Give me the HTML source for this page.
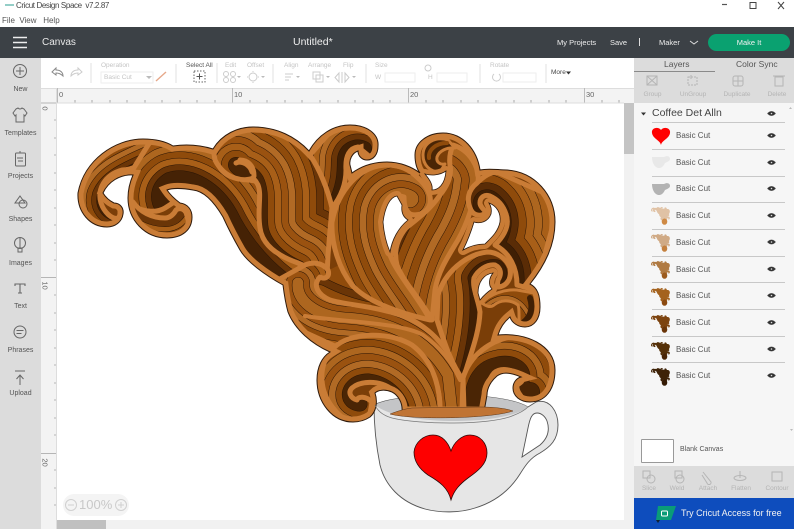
<!DOCTYPE html>
<html><head><meta charset="utf-8"><style>
html,body{margin:0;padding:0;width:794px;height:529px;overflow:hidden;background:#fff;font-family:"Liberation Sans",sans-serif}
body{filter:blur(.3px)}
.a{position:absolute;white-space:nowrap}
svg{position:absolute;left:0;top:0}
.n{font-size:7px;color:#555;width:41px;text-align:center;left:0}
.t{font-size:6.5px;color:#c4c4c4}
.p{font-size:6.5px;color:#b4b4b4;text-align:center}
.l{font-size:8px;color:#555;left:676px}
</style></head><body>
<div class="a" style="left:0;top:0;width:794px;height:27px;background:#fff"></div>
<div class="a" style="left:16px;top:1px;font-size:8px;letter-spacing:-.38px;color:#444">Cricut Design Space&nbsp; v7.2.87</div>
<div class="a" style="left:2px;top:16px;font-size:8px;color:#555">File&nbsp; View&nbsp; &nbsp;Help</div>
<div class="a" style="left:0;top:27px;width:794px;height:31px;background:#3c4146"></div>
<div class="a" style="left:42px;top:37px;font-size:10px;color:#e8e8e8">Canvas</div>
<div class="a" style="left:293px;top:36px;font-size:10.5px;color:#eee">Untitled*</div>
<div class="a" style="left:557px;top:38px;font-size:7.5px;color:#eee">My Projects</div>
<div class="a" style="left:610px;top:38px;font-size:7.5px;color:#eee">Save</div>
<div class="a" style="left:659px;top:38px;font-size:7.5px;color:#eee">Maker</div>
<div class="a" style="left:708px;top:34px;width:82px;height:17px;border-radius:9px;background:#0aa170;color:#f2f2f2;font-size:7.5px;line-height:17px;text-align:center">Make It</div>
<div class="a" style="left:0;top:58px;width:41px;height:471px;background:#dcdcdc"></div>
<div class="a" style="left:41px;top:58px;width:593px;height:30px;background:#fff"></div>
<div class="a" style="left:41px;top:88px;width:593px;height:15px;background:#f3f3f3;border-top:1px solid #ddd;box-sizing:border-box"></div>
<div class="a" style="left:41px;top:103px;width:16px;height:426px;background:#f3f3f3"></div>
<div class="a" style="left:624px;top:103px;width:10px;height:417px;background:#f1f1f1"></div>
<div class="a" style="left:624px;top:103px;width:10px;height:51px;background:#c4c4c4"></div>
<div class="a" style="left:57px;top:520px;width:577px;height:9px;background:#f1f1f1"></div>
<div class="a" style="left:57px;top:520px;width:49px;height:9px;background:#c0c0c0"></div>
<div class="a" style="left:634px;top:58px;width:160px;height:471px;background:#f6f6f6"></div>
<div class="a" style="left:634px;top:58px;width:160px;height:45px;background:#dcdcdc"></div>
<div class="a" style="left:634px;top:71px;width:81px;height:1px;background:#8a8a8a"></div>
<div class="a" style="left:664px;top:59px;font-size:8.5px;color:#555">Layers</div>
<div class="a" style="left:736px;top:59px;font-size:8.5px;color:#555">Color Sync</div>
<div class="a" style="left:634px;top:466px;width:160px;height:32px;background:#dcdcdc"></div>
<div class="a" style="left:634px;top:498px;width:160px;height:31px;background:#0e4dbd"></div>
<div class="a" style="left:681px;top:508px;font-size:9px;color:#f2f2f2">Try Cricut Access for free</div>
<div class="a" style="left:641px;top:439px;width:31px;height:22px;background:#fff;border:1px solid #999;border-radius:1px"></div>
<div class="a" style="left:680px;top:446px;font-size:7px;color:#555">Blank Canvas</div>

<div class="a n" style="top:86px">New</div>
<div class="a n" style="top:130px">Templates</div>
<div class="a n" style="top:173px">Projects</div>
<div class="a n" style="top:216px">Shapes</div>
<div class="a n" style="top:260px">Images</div>
<div class="a n" style="top:303px">Text</div>
<div class="a n" style="top:347px">Phrases</div>
<div class="a n" style="top:390px">Upload</div>

<div class="a t" style="left:101px;top:62px">Operation</div>
<div class="a t" style="left:104px;top:74px">Basic Cut</div>
<div class="a" style="left:186px;top:62px;font-size:6.5px;color:#555">Select All</div>
<div class="a t" style="left:225px;top:62px">Edit</div>
<div class="a t" style="left:247px;top:62px">Offset</div>
<div class="a t" style="left:284px;top:62px">Align</div>
<div class="a t" style="left:308px;top:62px">Arrange</div>
<div class="a t" style="left:343px;top:62px">Flip</div>
<div class="a t" style="left:375px;top:62px">Size</div>
<div class="a t" style="left:375px;top:74px">W</div>
<div class="a t" style="left:428px;top:74px">H</div>
<div class="a t" style="left:490px;top:62px">Rotate</div>
<div class="a" style="left:551px;top:69px;font-size:6.5px;color:#444">More</div>

<div class="a" style="left:59px;top:90px;font-size:7.5px;color:#666">0</div>
<div class="a" style="left:234px;top:90px;font-size:7.5px;color:#666">10</div>
<div class="a" style="left:410px;top:90px;font-size:7.5px;color:#666">20</div>
<div class="a" style="left:586px;top:90px;font-size:7.5px;color:#666">30</div>
<div class="a" style="left:43px;top:104px;font-size:7.5px;color:#666;transform:rotate(90deg)">0</div>
<div class="a" style="left:41px;top:281px;font-size:7.5px;color:#666;transform:rotate(90deg)">10</div>
<div class="a" style="left:41px;top:458px;font-size:7.5px;color:#666;transform:rotate(90deg)">20</div>

<div class="a p" style="left:634px;top:91px;width:37px">Group</div>
<div class="a p" style="left:673px;top:91px;width:40px">UnGroup</div>
<div class="a p" style="left:716px;top:91px;width:42px">Duplicate</div>
<div class="a p" style="left:758px;top:91px;width:38px">Delete</div>
<div class="a p" style="left:634px;top:485px;width:30px">Slice</div>
<div class="a p" style="left:663px;top:485px;width:28px">Weld</div>
<div class="a p" style="left:691px;top:485px;width:34px">Attach</div>
<div class="a p" style="left:724px;top:485px;width:34px">Flatten</div>
<div class="a p" style="left:760px;top:485px;width:34px">Contour</div>

<div class="a" style="left:652px;top:107px;font-size:10.5px;color:#444">Coffee Det Alln</div>
<div class="a l" style="top:131px">Basic Cut</div>
<div class="a l" style="top:158px">Basic Cut</div>
<div class="a l" style="top:184px">Basic Cut</div>
<div class="a l" style="top:211px">Basic Cut</div>
<div class="a l" style="top:238px">Basic Cut</div>
<div class="a l" style="top:265px">Basic Cut</div>
<div class="a l" style="top:291px">Basic Cut</div>
<div class="a l" style="top:318px">Basic Cut</div>
<div class="a l" style="top:345px">Basic Cut</div>
<div class="a l" style="top:371px">Basic Cut</div>
<div class="a" style="left:63px;top:494px;width:66px;height:22px;border-radius:11px;background:#f4f4f4"></div>
<div class="a" style="left:79px;top:497px;font-size:13px;color:#c8c8c8">100%</div>

<svg width="794" height="529" viewBox="0 0 794 529">
<defs>
<path id="sil" d="M78,193 C84,160 115,139 143,139 C155,139 165,141 173,146 C187,144 200,145 213,149 C222,134 238,127 253,127 C277,127 296,137 309,151 C318,135 333,125 350,125 C367,125 379,134 378,146 C378,155 373,160 367,160 C362,160 358,156 358,151 C352,153 349,160 350,165 L352,173 C363,165 375,162 387,162 C400,162 412,167 420,173 C416,168 415,162 415,155 C415,142 428,133 443,133 C463,133 477,150 480,170 C489,168 498,170 507,170 C535,172 555,195 555,222 C555,245 545,265 530,284 C538,288 540,296 540,307 C540,319 534,327 525,327 C518,327 512,323 510,317 C504,322 500,328 498,335 C525,332 555,345 555,370 C555,390 545,402 530,402 C520,402 513,396 513,388 C513,382 517,378 521,377 C510,372 502,372 497,376 C491,381 487,388 487,395 L484,412 L402,412 C403,403 398,395 392,392 C385,389 378,390 375,393 C378,402 376,412 370,417 C364,421 358,422 353,422 C332,422 317,402 317,380 C317,367 322,357 330,352 C312,344 295,330 288,312 C286,305 284,293 283,285 C265,275 247,262 240,250 C232,236 228,228 223,217 C213,200 203,191 193,190 C182,188 172,188 167,190 C171,196 176,200 180,203 C188,204 192,210 192,217 C192,230 182,238 167,238 C145,238 128,220 128,198 C128,190 130,182 133,175 C120,174 108,182 103,193 C106,198 110,201 114,203 C120,203 124,208 123,214 C122,222 115,227 107,227 C90,227 77,212 78,193 Z"/>
<clipPath id="csil"><use href="#sil"/></clipPath>

<path id="w1" d="M170,147 L130,125 L65,190 L100,238 L122,224 L118,218 C112,220 104,212 101,203 C97,190 104,175 122,170 C135,170 150,160 170,147Z"/>
<path id="s1" d="M170,150 C145,165 110,172 101,195 C98,207 106,216 116,217"/>
<path id="w2" d="M213,148 L150,142 L120,190 L135,207 C145,212 157,213 165,208 L185,195 L240,262 L300,305 L300,262 L262,235 L262,182 L235,178 C222,175 216,165 213,148Z"/>
<path id="s2" d="M287,285 C262,268 240,240 228,215 C215,192 190,175 170,182 C160,188 158,200 166,208"/>
<path id="w3b" d="M133,202 C140,212 152,218 165,218 C170,218 174,214 176,210 C180,207 186,209 187,216 L195,245 L120,245 L120,205Z"/>
<path id="s3" d="M133,202 C140,212 152,218 165,218 C172,218 176,214 178,210"/>
<path id="w4" d="M213,148 L240,115 L320,145 L332,207 L328,255 L327,275 L298,263 C275,255 262,243 260,228 C257,210 262,195 258,185 C256,181 255,180 253,178 C245,182 225,180 215,160Z"/>
<path id="s4" d="M298,268 C275,258 260,240 260,222 C259,205 262,192 256,180 C250,170 240,172 236,165"/>
<path id="w5" d="M310,155 L345,115 L390,140 L380,165 L358,147 C350,148 345,155 346,170 C346,185 340,198 332,208 C328,190 320,170 310,155Z"/>
<path id="s5" d="M333,208 C345,190 345,170 345,160 C346,150 355,145 364,149"/>
<path id="w12b" d="M325,272 L345,262 L375,310 L318,299 C312,290 318,282 325,278 Z"/>
<path id="s12b" d="M320,292 C335,300 352,306 372,310"/>
<path id="w12" d="M305,265 L278,280 L278,320 L337,347 C360,332 400,336 425,360 C440,385 440,400 440,410 L462,410 L463,380 C450,350 430,325 400,315 C370,305 345,305 330,300 C318,295 312,285 320,277 C326,280 330,276 328,270 C322,262 312,262 305,265Z"/>
<path id="s12" d="M298,283 C296,300 315,316 345,318 C385,320 425,335 448,375 L452,412"/>
<path id="w13" d="M337,345 C325,355 321,368 322,380 C323,400 338,418 355,425 L368,425 L372,402 C366,396 358,396 357,400 C350,398 348,392 352,388 C360,381 378,380 390,388 C398,394 403,400 403,410 L440,410 C440,385 432,360 412,345 C390,332 355,332 337,345Z"/>
<path id="s13" d="M403,412 C400,395 385,383 368,381 C355,381 347,390 350,398 C352,402 356,404 360,404"/>
<path id="w6" d="M388,165 C360,165 338,190 332,222 C331,245 340,270 352,285 C365,300 395,312 430,320 C420,300 402,280 393,262 C385,245 380,230 383,212 C386,200 395,194 404,197 C404,204 405,210 410,214 C418,217 428,212 430,204 C432,195 426,185 418,178 C410,170 400,165 388,165Z"/>
<path id="s6" d="M430,320 C420,300 402,280 393,262 C385,245 380,230 383,212 C386,200 398,192 410,199"/>
<path id="w7" d="M453,145 C470,150 480,168 478,182 C473,205 468,222 458,240 C447,258 438,272 435,290 L432,320 C420,298 405,285 397,265 C393,250 398,238 406,228 C416,220 430,210 440,195 C448,185 452,175 450,165 C449,158 450,152 453,145Z"/>
<path id="s7" d="M432,318 C435,285 447,258 458,240 C468,222 475,205 477,182 C478,170 470,155 455,148"/>
<path id="w8" d="M423,155 C423,143 435,136 448,140 L455,148 C447,147 439,151 437,157 C436,162 440,165 445,164 L440,172 C430,172 423,165 423,155Z"/>
<path id="w9" d="M497,172 L560,200 L535,290 L517,285 C517,268 510,253 495,245 C505,235 510,225 506,214 C503,205 497,199 490,196 C485,194 480,197 480,203 C480,206 483,209 486,212 C482,217 474,216 471,210 C466,200 468,190 477,183 C483,177 490,172 497,172Z"/>
<path id="s9" d="M517,287 C520,265 510,250 497,245 C510,225 505,208 492,198 C484,193 478,200 480,208"/>
<path id="w10" d="M487,252 C465,255 445,272 438,295 L437,320 C445,345 452,365 463,380 C470,355 479,335 480,312 C478,298 472,288 474,278 C478,270 487,264 495,265 C501,268 502,274 498,280 L497,287 C507,287 512,278 510,268 C506,258 497,252 487,252Z"/>
<path id="s10" d="M463,382 C478,335 478,298 474,278 C478,270 488,264 497,266 C502,270 502,276 498,282"/>
<path id="w11" d="M482,303 C490,294 505,289 517,290 L545,295 L535,330 L520,330 C518,317 520,310 518,305 C510,299 500,300 494,305 C490,308 486,306 482,303Z"/>
<path id="w14" d="M464,410 L463,378 C470,355 490,340 515,336 L560,345 L560,405 L530,405 C520,397 516,390 517,385 C522,382 524,380 521,376 C510,368 500,368 494,373 C488,380 485,392 485,410Z"/>
<path id="s14" d="M475,410 C472,385 482,370 497,367 C510,363 522,370 520,378 C518,386 520,392 530,392"/>
<clipPath id="c1"><use href="#w1"/></clipPath><clipPath id="c2"><use href="#w2"/></clipPath><clipPath id="c3"><use href="#w3b"/></clipPath><clipPath id="c4"><use href="#w4"/></clipPath><clipPath id="c5"><use href="#w5"/></clipPath><clipPath id="c6"><use href="#w6"/></clipPath><clipPath id="c7"><use href="#w7"/></clipPath><clipPath id="c8"><use href="#w8"/></clipPath><clipPath id="c9"><use href="#w9"/></clipPath><clipPath id="c10"><use href="#w10"/></clipPath><clipPath id="c11"><use href="#w11"/></clipPath><clipPath id="c12"><use href="#w12"/></clipPath><clipPath id="c12b"><use href="#w12b"/></clipPath><clipPath id="c13"><use href="#w13"/></clipPath><clipPath id="c14"><use href="#w14"/></clipPath>
</defs>
<!-- ruler ticks -->
<path d="M57.5,88V103M232.5,88V103M408.5,88V103M584.5,88V103" stroke="#bbb" fill="none"/>
<path d="M75,100V103M92,100V103M110,100V103M127,100V103M145,100V103M162,100V103M180,100V103M197,100V103M215,100V103M250,100V103M267,100V103M285,100V103M302,100V103M320,100V103M338,100V103M355,100V103M373,100V103M390,100V103M426,100V103M443,100V103M461,100V103M478,100V103M496,100V103M514,100V103M531,100V103M549,100V103M566,100V103M602,100V103M619,100V103" stroke="#aaa" fill="none"/>
<path d="M41,103H57M41,277.500H57M41,453.500H57M54,120H57M54,138H57M54,155H57M54,173H57M54,190H57M54,208H57M54,225H57M54,243H57M54,260H57M54,295H57M54,313H57M54,330H57M54,348H57M54,365H57M54,383H57M54,400H57M54,418H57M54,435H57M54,470H57M54,488H57M54,505H57" stroke="#b5b5b5" fill="none"/>
<path d="M56.500,88V529M57,103H624" stroke="#ddd" fill="none"/>
<!-- header icons -->
<path d="M13,37.500H27M13,42.500H27M13,47.500H27" stroke="#eee" stroke-width="1.6"/>
<path d="M690,41l4,3l4,-3" stroke="#ddd" fill="none"/>
<path d="M639.500,38V46" stroke="#ddd" stroke-width="1"/>
<path d="M722,4.500h5" stroke="#555" stroke-width="1.2"/>
<rect x="750" y="2.500" width="6" height="6" fill="none" stroke="#444"/>
<path d="M778,2l6,7M784,2l-6,7" stroke="#444"/>
<path d="M5,5h9" stroke="#2a9d8f" stroke-width="1"/>
<!-- sidebar icons -->
<g fill="none" stroke="#666" stroke-width="1">
<circle cx="20" cy="71" r="6.500"/><path d="M20,67v8M16,71h8"/>
<path d="M16,109 L18,108 Q20,110 22,108 L24,109 L27,113 L25,116 L24,115 V122 H16 V115 L15,116 L13,113Z"/>
<rect x="15.500" y="153" width="10" height="13" rx="1"/><path d="M17,158h6M18,161h5M20,151v2"/>
<path d="M20,196l5,7h-10z"/><circle cx="23" cy="204" r="4"/>
<circle cx="20" cy="243" r="5.500"/><path d="M18,248h4v4h-4zM20,238v10"/>
<path d="M15,286 V284 H25 V286 M20,284 V293 M18,293 H22" stroke-width="1.100"/>
<circle cx="20" cy="332" r="6"/><path d="M16.500,330.500h7M16.500,333.500h5"/>
<path d="M15,371h10M20,385v-10M16.500,379l3.500,-4l3.500,4"/>
</g>
<!-- toolbar icons -->
<g fill="none" stroke="#888" stroke-width="1">
<path d="M52,72l4,-4v2c5,0 7,3 7,6c-2,-2 -4,-3 -7,-3v2z"/>
<path d="M82,72l-4,-4v2c-5,0 -7,3 -7,6c2,-2 4,-3 7,-3v2z" stroke="#ccc"/>
<path d="M91,63V83M217,63V83M273,64V83M366,64V83M480,64V83M546,64V83M176,64V83" stroke="#e2e2e2"/>
<path d="M156,81l10,-9" stroke="#e6a88a" stroke-width="1.400"/>
<rect x="101" y="72" width="52" height="11" stroke="#eee"/>
<rect x="194" y="71" width="11" height="11" stroke="#666" stroke-dasharray="1.500 1.500"/><path d="M196.500,76.500h6M199.500,73.500v6" stroke="#555"/>
<g stroke="#ccc"><circle cx="226" cy="74" r="2.500"/><circle cx="233" cy="74" r="2.500"/><circle cx="226" cy="80" r="2.500"/><circle cx="233" cy="80" r="2.500"/>
<circle cx="253" cy="77" r="4"/><path d="M253,71v1M253,82v1M247,77h1M258,77h1"/>
<path d="M285,74h8M285,77h6M285,80h4"/>
<rect x="313" y="72" width="7" height="7"/><rect x="316" y="75" width="7" height="7"/>
<path d="M339,73v9l-4,-4.500zM345,73v9l4,-4.500zM342,72v11"/>
<path d="M494,74a4,4 0 1 0 5,0"/>
<rect x="385" y="73" width="30" height="9" stroke="#eee"/><rect x="437" y="73" width="30" height="9" stroke="#eee"/><rect x="503" y="73" width="33" height="9" stroke="#eee"/>
<circle cx="428" cy="68" r="3"/></g>
</g>
<path d="M146,76l3,3l3,-3zM237,76l2,2l2,-2zM261,76l2,2l2,-2zM296,76l2,2l2,-2zM326,76l2,2l2,-2zM352,76l2,2l2,-2z" fill="#bbb"/>
<path d="M566,71.500h5l-2.500,3z" fill="#333"/>
<!-- panel icons -->
<g fill="none" stroke="#b5b5b5">
<rect x="647" y="76" width="10" height="9"/><path d="M647,76l10,9M657,76l-10,9"/>
<rect x="688" y="77" width="9" height="8" stroke-dasharray="2 1"/><path d="M691,75v4"/>
<rect x="733" y="76" width="10" height="10" rx="2"/><path d="M733,81h10M738,76v10"/>
<rect x="775" y="77" width="8" height="9"/><path d="M773,76h12"/>
<rect x="643" y="471" width="7" height="7"/><circle cx="651" cy="479" r="4"/>
<rect x="675" y="471" width="7" height="7"/><circle cx="680" cy="479" r="4"/>
<path d="M703,472l8,10a2,2 0 0 1 -4,1l-5,-8"/>
<ellipse cx="740" cy="478" rx="6" ry="2.500"/><path d="M740,471v7"/>
<rect x="772" y="472" width="10" height="9"/>
</g>
<!-- layer rows -->
<path d="M652,122.500H785M652,149.500H785M652,176.500H785M652,202.500H785M652,229.500H785M652,256.500H785M652,282.500H785M652,309.500H785M652,336.500H785M652,362.500H785" stroke="#c8c8c8" fill="none"/>
<path d="M641,112.500h5l-2.500,3z" fill="#333"/>
<path d="M789,109l1.500,-2l1.500,2zM790,429l1.500,2l1.500,-2z" fill="#bbb"/>
<g fill="#333" stroke="#f6f6f6" stroke-width=".3">
<path d="M767,113.500q4.500,-5 9,0q-4.500,5 -9,0z"/><path d="M767,135.500q4.500,-5 9,0q-4.500,5 -9,0z"/><path d="M767,162.500q4.500,-5 9,0q-4.500,5 -9,0z"/><path d="M767,188.500q4.500,-5 9,0q-4.500,5 -9,0z"/><path d="M767,215.500q4.500,-5 9,0q-4.500,5 -9,0z"/><path d="M767,242q4.500,-5 9,0q-4.500,5 -9,0z"/><path d="M767,269q4.500,-5 9,0q-4.500,5 -9,0z"/><path d="M767,295.500q4.500,-5 9,0q-4.500,5 -9,0z"/><path d="M767,322.500q4.500,-5 9,0q-4.500,5 -9,0z"/><path d="M767,349q4.500,-5 9,0q-4.500,5 -9,0z"/><path d="M767,375.500q4.500,-5 9,0q-4.500,5 -9,0z"/>
</g>
<g fill="#ddd"><circle cx="771.500" cy="113.500" r=".8"/><circle cx="771.500" cy="135.500" r=".8"/><circle cx="771.500" cy="162.500" r=".8"/><circle cx="771.500" cy="188.500" r=".8"/><circle cx="771.500" cy="215.500" r=".8"/><circle cx="771.500" cy="242" r=".8"/><circle cx="771.500" cy="269" r=".8"/><circle cx="771.500" cy="295.500" r=".8"/><circle cx="771.500" cy="322.500" r=".8"/><circle cx="771.500" cy="349" r=".8"/><circle cx="771.500" cy="375.500" r=".8"/></g>
<!-- thumbs -->
<path d="M661,145 C660,140 653,139 652,133 C651,128 658,126 661,130 C664,126 671,128 670,133 C669,139 662,140 661,145Z" fill="#f00"/>
<path d="M652,157 h12 c4,-2 6,0 6,2 c0,2 -3,3 -5,4 c-2,4 -4,5 -6,5 c-4,0 -7,-5 -7,-11z" fill="#e8e8e8"/>
<path d="M652,184 h12 c4,-2 6,0 6,2 c0,2 -3,3 -5,4 c-2,4 -4,5 -6,5 c-4,0 -7,-5 -7,-11z" fill="#b3b3b3"/>
<g transform="translate(651,207) scale(.0395,.045) translate(-78,-125)"><use href="#sil" fill="#e0c2a5"/><circle cx="420" cy="450" r="70" fill="#cf8a45"/></g>
<g transform="translate(651,234) scale(.0395,.045) translate(-78,-125)"><use href="#sil" fill="#d0aa85"/><circle cx="420" cy="450" r="70" fill="#c4803e"/></g>
<g transform="translate(651,261) scale(.0395,.045) translate(-78,-125)"><use href="#sil" fill="#b07a42"/><circle cx="420" cy="450" r="70" fill="#9c5a1c"/></g>
<g transform="translate(651,288) scale(.0395,.045) translate(-78,-125)"><use href="#sil" fill="#a4621e"/><circle cx="420" cy="450" r="70" fill="#8c4a10"/></g>
<g transform="translate(651,315) scale(.0395,.045) translate(-78,-125)"><use href="#sil" fill="#7c430f"/><circle cx="420" cy="450" r="70" fill="#6a3508"/></g>
<g transform="translate(651,342) scale(.0395,.045) translate(-78,-125)"><use href="#sil" fill="#553008"/><circle cx="420" cy="450" r="70" fill="#4a2505"/></g>
<g transform="translate(651,368) scale(.0395,.045) translate(-78,-125)"><use href="#sil" fill="#3e2207"/><circle cx="420" cy="450" r="70" fill="#351b04"/></g>
<!-- access icon -->
<path d="M658,506h18l-5,14h-15z" fill="#0a9c78"/><path d="M656,520l4,0l-2,3z" fill="#123"/>
<rect x="661.500" y="511" width="6" height="5" rx="1" fill="none" stroke="#fff"/>
<!-- zoom control -->
<g fill="none" stroke="#d0d0d0"><circle cx="71" cy="505" r="5.500"/><path d="M68,505h6"/><circle cx="121" cy="505" r="5.500"/><path d="M118,505h6M121,502v6"/></g>

<!-- cup body (behind the steam) -->
<path d="M374,405 C395,393 500,390 528,407 L536,402 C550,398 558,412 558,425 C558,440 550,447 540,453 C530,458 525,466 520,474 C510,490 495,502 475,508 C460,513 440,513 425,509 C400,502 385,485 380,465 C376,445 374,425 374,405 Z M537,413 C532,413 530,418 528,428 L522,457 L540,445 C548,438 550,430 547,421 C545,416 541,413 537,413 Z" fill="#e6e6e6" fill-rule="evenodd" stroke="#555" stroke-width=".9"/>
<path d="M375,405 C395,393 500,390 528,407 C505,426 400,426 375,405Z" fill="#c4c5c7"/>

<!-- artwork -->
<g clip-path="url(#csil)">
<use href="#sil" fill="#7a3e08"/>
<g fill="none" stroke-linecap="round" stroke-linejoin="round">
<g clip-path="url(#c1)">
<use href="#s1" stroke="#2b1505" stroke-width="64"/><use href="#s1" stroke="#a85f18" stroke-width="63"/><use href="#s1" stroke="#2b1505" stroke-width="52"/><use href="#s1" stroke="#8f4b0b" stroke-width="51"/><use href="#s1" stroke="#2b1505" stroke-width="40"/><use href="#s1" stroke="#b16a25" stroke-width="39"/><use href="#s1" stroke="#2b1505" stroke-width="29"/><use href="#s1" stroke="#8f4b0b" stroke-width="28"/><use href="#s1" stroke="#2b1505" stroke-width="18"/><use href="#s1" stroke="#6a3507" stroke-width="17"/><use href="#s1" stroke="#2b1505" stroke-width="8"/><use href="#s1" stroke="#3f1f04" stroke-width="7"/></g>
<use href="#w1" stroke="#c97c36" stroke-width="5"/>
<g clip-path="url(#c2)">
<use href="#s2" stroke="#2b1505" stroke-width="100"/><use href="#s2" stroke="#b16a25" stroke-width="99"/><use href="#s2" stroke="#2b1505" stroke-width="86"/><use href="#s2" stroke="#9a5210" stroke-width="85"/><use href="#s2" stroke="#2b1505" stroke-width="72"/><use href="#s2" stroke="#ad661f" stroke-width="71"/><use href="#s2" stroke="#2b1505" stroke-width="58"/><use href="#s2" stroke="#8f4b0b" stroke-width="57"/><use href="#s2" stroke="#2b1505" stroke-width="45"/><use href="#s2" stroke="#a85f18" stroke-width="44"/><use href="#s2" stroke="#2b1505" stroke-width="32"/><use href="#s2" stroke="#6a3507" stroke-width="31"/><use href="#s2" stroke="#2b1505" stroke-width="20"/><use href="#s2" stroke="#452205" stroke-width="19"/></g>
<use href="#w2" stroke="#c97c36" stroke-width="5"/>
<g clip-path="url(#c3)">
<use href="#s3" stroke="#2b1505" stroke-width="48"/><use href="#s3" stroke="#b16a25" stroke-width="47"/><use href="#s3" stroke="#2b1505" stroke-width="38"/><use href="#s3" stroke="#8f4b0b" stroke-width="37"/><use href="#s3" stroke="#2b1505" stroke-width="28"/><use href="#s3" stroke="#a85f18" stroke-width="27"/><use href="#s3" stroke="#2b1505" stroke-width="18"/><use href="#s3" stroke="#6a3507" stroke-width="17"/></g>
<use href="#w3b" stroke="#c97c36" stroke-width="5"/>
<g clip-path="url(#c4)">
<use href="#s4" stroke="#2b1505" stroke-width="156"/><use href="#s4" stroke="#a85f18" stroke-width="155"/><use href="#s4" stroke="#2b1505" stroke-width="142"/><use href="#s4" stroke="#8f4b0b" stroke-width="141"/><use href="#s4" stroke="#2b1505" stroke-width="128"/><use href="#s4" stroke="#6a3507" stroke-width="127"/><use href="#s4" stroke="#2b1505" stroke-width="114"/><use href="#s4" stroke="#8f4b0b" stroke-width="113"/><use href="#s4" stroke="#2b1505" stroke-width="100"/><use href="#s4" stroke="#a85f18" stroke-width="99"/><use href="#s4" stroke="#2b1505" stroke-width="86"/><use href="#s4" stroke="#8f4b0b" stroke-width="85"/><use href="#s4" stroke="#2b1505" stroke-width="72"/><use href="#s4" stroke="#b16a25" stroke-width="71"/><use href="#s4" stroke="#2b1505" stroke-width="58"/><use href="#s4" stroke="#9a5210" stroke-width="57"/><use href="#s4" stroke="#2b1505" stroke-width="44"/><use href="#s4" stroke="#a85f18" stroke-width="43"/><use href="#s4" stroke="#2b1505" stroke-width="30"/><use href="#s4" stroke="#8f4b0b" stroke-width="29"/><use href="#s4" stroke="#2b1505" stroke-width="16"/><use href="#s4" stroke="#4a2505" stroke-width="15"/></g>
<use href="#w4" stroke="#c97c36" stroke-width="5"/>
<path d="M236,163 C242,160 250,165 252,172 M240,160 C248,160 254,166 254,176" stroke="#c97c36" stroke-width="5"/>
<g clip-path="url(#c5)">
<use href="#s5" stroke="#2b1505" stroke-width="64"/><use href="#s5" stroke="#a85f18" stroke-width="63"/><use href="#s5" stroke="#2b1505" stroke-width="52"/><use href="#s5" stroke="#b16a25" stroke-width="51"/><use href="#s5" stroke="#2b1505" stroke-width="40"/><use href="#s5" stroke="#9a5210" stroke-width="39"/><use href="#s5" stroke="#2b1505" stroke-width="28"/><use href="#s5" stroke="#6a3507" stroke-width="27"/><use href="#s5" stroke="#2b1505" stroke-width="16"/><use href="#s5" stroke="#3f1f04" stroke-width="15"/></g>
<use href="#w5" stroke="#c97c36" stroke-width="5"/>
<g clip-path="url(#c12b)"><use href="#w12b" fill="#8f4b0b"/>
<use href="#s12b" stroke="#2b1505" stroke-width="30"/><use href="#s12b" stroke="#6a3507" stroke-width="29"/><use href="#s12b" stroke="#2b1505" stroke-width="15"/><use href="#s12b" stroke="#8f4b0b" stroke-width="14"/></g>
<g clip-path="url(#c12)">
<use href="#s12" stroke="#2b1505" stroke-width="84"/><use href="#s12" stroke="#6a3507" stroke-width="83"/><use href="#s12" stroke="#2b1505" stroke-width="72"/><use href="#s12" stroke="#8f4b0b" stroke-width="71"/><use href="#s12" stroke="#2b1505" stroke-width="60"/><use href="#s12" stroke="#a85f18" stroke-width="59"/><use href="#s12" stroke="#2b1505" stroke-width="48"/><use href="#s12" stroke="#8f4b0b" stroke-width="47"/><use href="#s12" stroke="#2b1505" stroke-width="36"/><use href="#s12" stroke="#b16a25" stroke-width="35"/><use href="#s12" stroke="#2b1505" stroke-width="24"/><use href="#s12" stroke="#9a5210" stroke-width="23"/><use href="#s12" stroke="#2b1505" stroke-width="12"/><use href="#s12" stroke="#ad661f" stroke-width="11"/></g>
<use href="#w12" stroke="#c97c36" stroke-width="5"/>
<path d="M305,316 C340,322 400,322 423,335 C440,347 452,362 460,380" stroke="#c97c36" stroke-width="4"/>
<g clip-path="url(#c13)">
<use href="#s13" stroke="#2b1505" stroke-width="98"/><use href="#s13" stroke="#a85f18" stroke-width="97"/><use href="#s13" stroke="#2b1505" stroke-width="84"/><use href="#s13" stroke="#8f4b0b" stroke-width="83"/><use href="#s13" stroke="#2b1505" stroke-width="70"/><use href="#s13" stroke="#ad661f" stroke-width="69"/><use href="#s13" stroke="#2b1505" stroke-width="56"/><use href="#s13" stroke="#9a5210" stroke-width="55"/><use href="#s13" stroke="#2b1505" stroke-width="42"/><use href="#s13" stroke="#b16a25" stroke-width="41"/><use href="#s13" stroke="#2b1505" stroke-width="28"/><use href="#s13" stroke="#8f4b0b" stroke-width="27"/><use href="#s13" stroke="#2b1505" stroke-width="15"/><use href="#s13" stroke="#4a2505" stroke-width="14"/></g>
<use href="#w13" stroke="#c97c36" stroke-width="5"/>
<g clip-path="url(#c6)">
<use href="#s6" stroke="#2b1505" stroke-width="116"/><use href="#s6" stroke="#8f4b0b" stroke-width="115"/><use href="#s6" stroke="#2b1505" stroke-width="102"/><use href="#s6" stroke="#a85f18" stroke-width="101"/><use href="#s6" stroke="#2b1505" stroke-width="88"/><use href="#s6" stroke="#8f4b0b" stroke-width="87"/><use href="#s6" stroke="#2b1505" stroke-width="74"/><use href="#s6" stroke="#a85f18" stroke-width="73"/><use href="#s6" stroke="#2b1505" stroke-width="60"/><use href="#s6" stroke="#8f4b0b" stroke-width="59"/><use href="#s6" stroke="#2b1505" stroke-width="46"/><use href="#s6" stroke="#b16a25" stroke-width="45"/><use href="#s6" stroke="#2b1505" stroke-width="32"/><use href="#s6" stroke="#9a5210" stroke-width="31"/><use href="#s6" stroke="#2b1505" stroke-width="18"/><use href="#s6" stroke="#ad661f" stroke-width="17"/></g>
<use href="#w6" stroke="#c97c36" stroke-width="5"/>
<g clip-path="url(#c7)">
<use href="#s7" stroke="#2b1505" stroke-width="136"/><use href="#s7" stroke="#5a2c06" stroke-width="135"/><use href="#s7" stroke="#2b1505" stroke-width="96"/><use href="#s7" stroke="#8f4b0b" stroke-width="95"/><use href="#s7" stroke="#2b1505" stroke-width="80"/><use href="#s7" stroke="#a85f18" stroke-width="79"/><use href="#s7" stroke="#2b1505" stroke-width="64"/><use href="#s7" stroke="#8f4b0b" stroke-width="63"/><use href="#s7" stroke="#2b1505" stroke-width="48"/><use href="#s7" stroke="#b16a25" stroke-width="47"/><use href="#s7" stroke="#2b1505" stroke-width="32"/><use href="#s7" stroke="#9a5210" stroke-width="31"/><use href="#s7" stroke="#2b1505" stroke-width="16"/><use href="#s7" stroke="#ad661f" stroke-width="15"/></g>
<use href="#w7" stroke="#c97c36" stroke-width="5"/>
<use href="#w8" fill="#4a2505" stroke="#c97c36" stroke-width="3"/>
<path d="M447,143 C436,143 428,150 429,158" stroke="#8f4b0b" stroke-width="4"/>
<g clip-path="url(#c9)">
<use href="#s9" stroke="#2b1505" stroke-width="124"/><use href="#s9" stroke="#a85f18" stroke-width="123"/><use href="#s9" stroke="#2b1505" stroke-width="108"/><use href="#s9" stroke="#8f4b0b" stroke-width="107"/><use href="#s9" stroke="#2b1505" stroke-width="92"/><use href="#s9" stroke="#a85f18" stroke-width="91"/><use href="#s9" stroke="#2b1505" stroke-width="76"/><use href="#s9" stroke="#ad661f" stroke-width="75"/><use href="#s9" stroke="#2b1505" stroke-width="60"/><use href="#s9" stroke="#a85f18" stroke-width="59"/><use href="#s9" stroke="#2b1505" stroke-width="44"/><use href="#s9" stroke="#8f4b0b" stroke-width="43"/><use href="#s9" stroke="#2b1505" stroke-width="28"/><use href="#s9" stroke="#5a2c06" stroke-width="27"/><use href="#s9" stroke="#2b1505" stroke-width="14"/><use href="#s9" stroke="#3f1f04" stroke-width="13"/></g>
<use href="#w9" stroke="#c97c36" stroke-width="5"/>
<g clip-path="url(#c10)">
<use href="#s10" stroke="#2b1505" stroke-width="96"/><use href="#s10" stroke="#ad661f" stroke-width="95"/><use href="#s10" stroke="#2b1505" stroke-width="82"/><use href="#s10" stroke="#9a5210" stroke-width="81"/><use href="#s10" stroke="#2b1505" stroke-width="68"/><use href="#s10" stroke="#b16a25" stroke-width="67"/><use href="#s10" stroke="#2b1505" stroke-width="54"/><use href="#s10" stroke="#8f4b0b" stroke-width="53"/><use href="#s10" stroke="#2b1505" stroke-width="40"/><use href="#s10" stroke="#a85f18" stroke-width="39"/><use href="#s10" stroke="#2b1505" stroke-width="26"/><use href="#s10" stroke="#6a3507" stroke-width="25"/><use href="#s10" stroke="#2b1505" stroke-width="13"/><use href="#s10" stroke="#3f1f04" stroke-width="12"/></g>
<use href="#w10" stroke="#c97c36" stroke-width="5"/>
<g clip-path="url(#c11)"><use href="#w11" fill="#8f4b0b"/>
<path d="M484,308 C498,293 518,294 528,314" stroke="#2b1505" stroke-width="5"/><path d="M484,308 C498,293 518,294 528,314" stroke="#b16a25" stroke-width="4"/><path d="M530,298 C534,310 529,318 524,322" stroke="#3f1f04" stroke-width="6"/></g>
<use href="#w11" stroke="#c97c36" stroke-width="3"/>
<g clip-path="url(#c14)"><use href="#w14" fill="#8f4b0b"/>
<use href="#s14" stroke="#2b1505" stroke-width="76"/><use href="#s14" stroke="#a85f18" stroke-width="75"/><use href="#s14" stroke="#2b1505" stroke-width="62"/><use href="#s14" stroke="#8f4b0b" stroke-width="61"/><use href="#s14" stroke="#2b1505" stroke-width="48"/><use href="#s14" stroke="#ad661f" stroke-width="47"/><use href="#s14" stroke="#2b1505" stroke-width="34"/><use href="#s14" stroke="#8f4b0b" stroke-width="33"/><use href="#s14" stroke="#2b1505" stroke-width="20"/><use href="#s14" stroke="#4a2505" stroke-width="19"/></g>
<use href="#w14" stroke="#c97c36" stroke-width="5"/>
</g>
<use href="#sil" fill="none" stroke="#c97c36" stroke-width="11"/>
</g>
<!-- holes -->
<g stroke="#c97c36" stroke-width="10" stroke-linejoin="round">
<path d="M397,196 C390,197 385,207 383,222 C384,235 387,245 390,252 C392,240 398,228 408,220 C403,217 401,212 402,205 Z"/>
<path d="M463,250 C468,240 471,232 474,222 C480,224 488,222 491,214 C492,209 491,206 489,203 C497,206 501,213 500,222 C498,232 491,238 485,244 C478,244 470,246 463,250Z"/>
<path d="M493,273 C484,274 478,282 478,293 L480,300 C484,295 489,291 492,289 C488,285 489,278 493,273Z"/>
<path d="M446,171 C440,175 432,176 425,174 C430,180 433,185 432,190 C438,190 445,185 446,171Z"/>
</g>
<g fill="#fff" stroke="#2e1a0c" stroke-width=".8">
<path d="M397,196 C390,197 385,207 383,222 C384,235 387,245 390,252 C392,240 398,228 408,220 C403,217 401,212 402,205 Z"/>
<path d="M463,250 C468,240 471,232 474,222 C480,224 488,222 491,214 C492,209 491,206 489,203 C497,206 501,213 500,222 C498,232 491,238 485,244 C478,244 470,246 463,250Z"/>
<path d="M493,273 C484,274 478,282 478,293 L480,300 C484,295 489,291 492,289 C488,285 489,278 493,273Z"/>
<path d="M446,171 C440,175 432,176 425,174 C430,180 433,185 432,190 C438,190 445,185 446,171Z"/>
</g>
<use href="#sil" fill="none" stroke="#2e1a0c" stroke-width="1"/>
<!-- coffee and cup front -->
<path d="M390,414 C398,411 404,409 412,408 L480,407 C492,407 505,408 513,411 C490,419 410,420 390,414 Z" fill="#c07434" stroke="#5a3418" stroke-width=".5"/>
<path d="M375,405 C378,412 385,416 392,418 C420,425 490,425 512,416 C520,413 525,410 528,407" fill="none" stroke="#777" stroke-width=".8"/>
<path d="M451,500 C448,488 440,482 428,475 C418,468 414,460 414,452 C415,442 424,435 433,435 C442,435 448,442 451,451 C454,442 462,435 470,435 C480,435 487,443 487,453 C487,464 478,471 468,478 C460,484 454,490 451,500Z" fill="#fe0000" stroke="#2a0a0a" stroke-width=".8"/>
</svg>
</body></html>
